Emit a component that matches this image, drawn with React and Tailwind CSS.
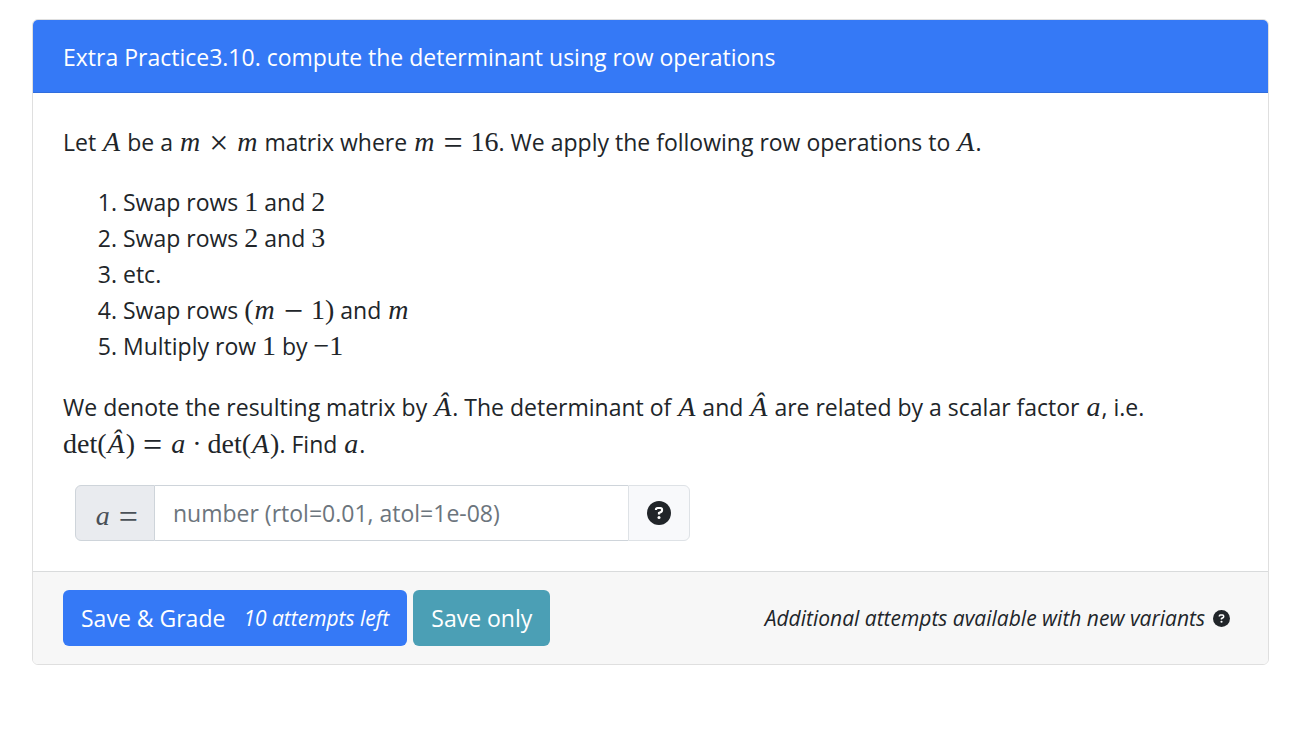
import React from 'react';

// Math runs: upright digits/operators and italic variables
function Num({ children }) {
  return <span className="font-['Liberation_Serif',serif] text-[28px] leading-none">{children}</span>;
}

function Var({ children }) {
  return <i className="font-['Liberation_Serif',serif] text-[28px] leading-none px-px">{children}</i>;
}

function Op({ children }) {
  return <span className="font-['Liberation_Serif',serif] text-[34px] leading-none px-2 align-[-3px]">{children}</span>;
}

function HelpIcon({ className }) {
  return (
    <svg viewBox="0 0 24 24" className={className}>
      <circle cx="12" cy="12" r="12" fill="#212529" />
      <path
        d="M9 9V8.5Q9 7 10.5 7H13.5Q15 7 15 8.5V9.5Q15 10.5 14 11L12 12V13.5"
        fill="none"
        stroke="#fff"
        strokeWidth="2.2"
      />
      <circle cx="12" cy="16.5" r="1.5" fill="#fff" />
    </svg>
  );
}

export default function App() {
  return (
    <main className="pt-[19px] pl-8 pr-[30px] font-['Open_Sans','Noto_Sans',sans-serif] text-[23px] leading-9 text-[#212529]">
      <section className="rounded-md border border-[#dfdfdf] bg-white overflow-hidden">
        <h1 className="bg-[#3579f6] border-b border-[#306ddd] px-[30px] pt-[19px] pb-[17px] text-white">
          Extra Practice3.10. compute the determinant using row operations
        </h1>

        <div className="px-[30px] pt-[31px] pb-[30px]">
          <p className="mb-6">
            Let <Var>A</Var> be a <Var>m</Var><Op>×</Op><Var>m</Var> matrix where <Var>m</Var><Op>=</Op><Num>16</Num>. We apply the
            following row operations to <Var>A</Var>.
          </p>

          <ol className="list-decimal pl-[60px] mb-[25px]">
            <li>Swap rows <Num>1</Num> and <Num>2</Num></li>
            <li>Swap rows <Num>2</Num> and <Num>3</Num></li>
            <li>etc.</li>
            <li>Swap rows <Num>(</Num><Var>m</Var><Op>−</Op><Num>1)</Num> and <Var>m</Var></li>
            <li>Multiply row <Num>1</Num> by <Num>−1</Num></li>
          </ol>

          <p className="mb-[22px] leading-[37px]">
            We denote the resulting matrix by <Var>Â</Var>. The determinant of <Var>A</Var> and <Var>Â</Var> are related by a
            scalar factor <Var>a</Var>, i.e.{' '}
            <span className="whitespace-nowrap">
              <Num>det(</Num><Var>Â</Var><Num>)</Num><Op>=</Op><Var>a</Var> <Num>·</Num> <Num>det(</Num><Var>A</Var><Num>)</Num>.
            </span>{' '}
            Find <Var>a</Var>.
          </p>

          <div className="mx-3 flex h-14 max-w-[615px]">
            <label
              htmlFor="answer"
              className="flex w-20 shrink-0 justify-end rounded-l-md border border-[#ced4da] bg-[#e9ebef] pt-3 pr-2 text-[#495057]"
            >
              <span><Var>a</Var><Op>=</Op></span>
            </label>
            <input
              id="answer"
              type="text"
              placeholder="number (rtol=0.01, atol=1e-08)"
              className="min-w-0 flex-1 border-y border-[#ced4da] bg-white px-[18px] placeholder:text-[#6c757d]"
            />
            <button
              type="button"
              aria-label="Help"
              className="flex w-[62px] shrink-0 items-center justify-center rounded-r-md border border-[#dee2e6] bg-[#f8f9fb]"
            >
              <HelpIcon className="size-6" />
            </button>
          </div>
        </div>

        <div className="flex flex-wrap items-center gap-1.5 border-t border-[#d9dbdc] bg-[#f7f7f7] px-[30px] py-[18px]">
          <button type="button" className="flex h-14 items-center gap-[18px] rounded-md bg-[#3579f6] px-[18px] text-white">
            Save &amp; Grade
            <i className="text-[21px]">10 attempts left</i>
          </button>
          <button type="button" className="h-14 rounded-md bg-[#4b9fb5] px-[18px] text-white">
            Save only
          </button>
          <div className="ml-auto flex items-center gap-2 pr-2">
            <i className="text-[21px]">Additional attempts available with new variants</i>
            <button type="button" aria-label="About attempts">
              <HelpIcon className="size-[17px]" />
            </button>
          </div>
        </div>
      </section>
    </main>
  );
}
